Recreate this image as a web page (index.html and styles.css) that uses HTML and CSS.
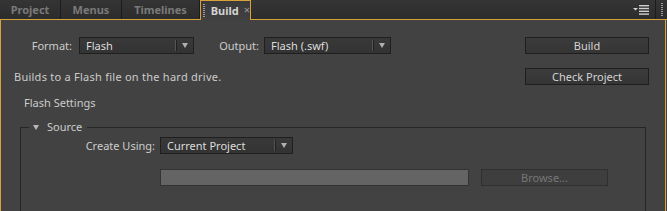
FILE: index.html
```html
<!DOCTYPE html>
<html>
<head>
<meta charset="utf-8">
<link rel="stylesheet" href="styles.css">
</head>
<body>
<div class="tabbar">
  <div class="tab t-project">Project</div>
  <div class="tab t-menus">Menus</div>
  <div class="tab t-timelines">Timelines</div>
  <div class="tab active"><span class="grip"></span><span class="tab-label">Build</span><span class="close">×</span></div>
  <div class="tab-fill">
    <svg class="menu-icon" width="16" height="10" viewBox="0 0 16 10">
      <polygon points="0,3 5,3 2.5,5.5" fill="#d0d0d0"/>
      <rect x="6" y="0" width="10" height="1.4" fill="#d0d0d0"/>
      <rect x="6" y="2.8" width="10" height="1.4" fill="#d0d0d0"/>
      <rect x="6" y="5.6" width="10" height="1.4" fill="#d0d0d0"/>
      <rect x="6" y="8.4" width="10" height="1.4" fill="#d0d0d0"/>
    </svg>
  </div>
  <div class="bar-end"><span class="grip"></span></div>
</div>
<div class="panel">
  <div class="row row1">
    <span class="label l-format">Format:</span>
    <div class="select s-format"><span class="sel-text">Flash</span><span class="sel-arrow"></span></div>
    <span class="label l-output">Output:</span>
    <div class="select s-output"><span class="sel-text">Flash (.swf)</span><span class="sel-arrow"></span></div>
    <div class="btn">Build</div>
  </div>
  <div class="row row2">
    <span class="desc">Builds to a Flash file on the hard drive.</span>
    <div class="btn">Check Project</div>
  </div>
  <div class="heading">Flash Settings</div>
  <fieldset class="source">
    <legend><span class="tri"></span>Source</legend>
    <div class="row row-create">
      <span class="label l-create">Create Using:</span>
      <div class="select s-create"><span class="sel-text">Current Project</span><span class="sel-arrow"></span></div>
    </div>
    <div class="row row-path">
      <div class="path-field"></div>
      <div class="btn btn-disabled">Browse...</div>
    </div>
  </fieldset>
</div>
</body>
</html>
```
FILE: styles.css
```css
html, body {
  margin: 0;
  padding: 0;
  width: 667px;
  height: 211px;
  overflow: hidden;
  background: #424242;
  font-family: "Noto Sans", "DejaVu Sans", sans-serif;
  font-size: 11px;
  color: #cccccc;
}

.tabbar {
  display: flex;
  height: 19px;
  background: linear-gradient(#353535, #2c2c2c);
  border-bottom: 1px solid #d9a13a;
  box-sizing: content-box;
}

.tab {
  display: flex;
  align-items: center;
  justify-content: center;
  height: 19px;
  box-sizing: border-box;
  border-right: 1px solid #1c1c1c;
  color: #7a7a7a;
  font-weight: bold;
  font-size: 11px;
}
.t-project { width: 61px; }
.t-menus { width: 61px; }
.t-timelines { width: 78px; }

.tab.active {
  width: 51px;
  height: 20px;
  margin-bottom: -1px;
  background: linear-gradient(#3a3a3a, #404040);
  border: 1px solid #d9a13a;
  border-bottom: none;
  color: #d4d4d4;
  justify-content: flex-start;
  padding-left: 2px;
  position: relative;
  z-index: 1;
}
.tab.active .grip {
  width: 2px;
  height: 13px;
  margin-right: 6px;
  background: repeating-linear-gradient(#9a9a9a 0 1px, transparent 1px 2px);
}
.tab-label { margin-top: -1px; }
.close {
  margin-left: 5px;
  font-weight: normal;
  color: #9a9a9a;
  font-size: 11px;
  margin-top: -2px;
}

.tab-fill {
  flex: 1;
  display: flex;
  align-items: center;
  justify-content: flex-end;
  padding-right: 6px;
  border-right: 1px solid #1c1c1c;
}
.menu-icon { margin-top: 1px; }

.bar-end {
  width: 11px;
  display: flex;
  align-items: center;
  justify-content: center;
}
.bar-end .grip {
  width: 2px;
  height: 13px;
  background: repeating-linear-gradient(#9a9a9a 0 1px, transparent 1px 2px);
}

.panel {
  height: 191px;
  overflow: hidden;
  border-left: 1px solid #d9a13a;
  border-right: 1px solid #d9a13a;
  margin-right: 1px;
  box-sizing: border-box;
  padding: 0 16px 0 13px;
}

.row {
  display: flex;
  align-items: center;
}
.row1 {
  margin-top: 17px;
  height: 17px;
}
.row2 {
  margin-top: 14px;
  height: 17px;
}

.label {
  text-align: right;
  color: #cccccc;
}
.l-format { width: 58px; margin-right: 7px; }
.l-output { width: 65px; margin-right: 5px; }

.select {
  height: 17px;
  box-sizing: border-box;
  border: 1px solid #1f1f1f;
  background: linear-gradient(#393939, #333333);
  display: flex;
  align-items: center;
  position: relative;
  color: #dcdcdc;
}
.sel-text {
  flex: 1;
  padding-left: 6px;
  margin-top: -1px;
}
.sel-arrow {
  width: 16px;
  height: 11px;
  border-left: 1px solid #202020;
  box-shadow: -1px 0 0 #555;
  position: relative;
}
.sel-arrow::after {
  content: "";
  position: absolute;
  left: 5px;
  top: 3px;
  border-left: 3.5px solid transparent;
  border-right: 3.5px solid transparent;
  border-top: 5px solid #b0b0b0;
}
.s-format { width: 115px; }
.s-output { width: 127px; }
.s-create { width: 133px; }

.btn {
  margin-left: auto;
  width: 124px;
  height: 17px;
  box-sizing: border-box;
  border: 1px solid #1f1f1f;
  background: linear-gradient(#3c3c3c, #353535);
  display: flex;
  align-items: center;
  justify-content: center;
  color: #d4d4d4;
  padding-bottom: 1px;
}

.desc {
  color: #cccccc;
  letter-spacing: 0.25px;
}

.heading {
  margin-top: 10px;
  margin-left: 10px;
  height: 16px;
  line-height: 16px;
  color: #cccccc;
}

fieldset.source {
  margin: 9px 0 0 6px;
  width: 626px;
  height: 91px;
  box-sizing: border-box;
  padding: 0;
  border: 1px solid #262626;
  border-bottom: none;
  min-width: 0;
}
fieldset.source legend {
  margin-left: 8px;
  padding: 0 5px 0 4px;
  color: #cccccc;
  line-height: 14px;
  display: flex;
  align-items: center;
}
.tri {
  width: 0;
  height: 0;
  border-left: 3.5px solid transparent;
  border-right: 3.5px solid transparent;
  border-top: 5px solid #b8b8b8;
  margin-right: 8px;
  margin-top: 1px;
}

.row-create {
  margin-top: 3px;
  height: 17px;
}
.l-create { width: 134px; margin-right: 5px; }

.row-path {
  margin-top: 15px;
  margin-left: 139px;
  height: 17px;
}
.path-field {
  width: 309px;
  height: 17px;
  box-sizing: border-box;
  border: 1px solid #333;
  background: #646464;
}
.btn.btn-disabled {
  margin-left: 12px;
  width: 127px;
  border-color: #303030;
  background: #3e3e3e;
  color: #777;
}
```
